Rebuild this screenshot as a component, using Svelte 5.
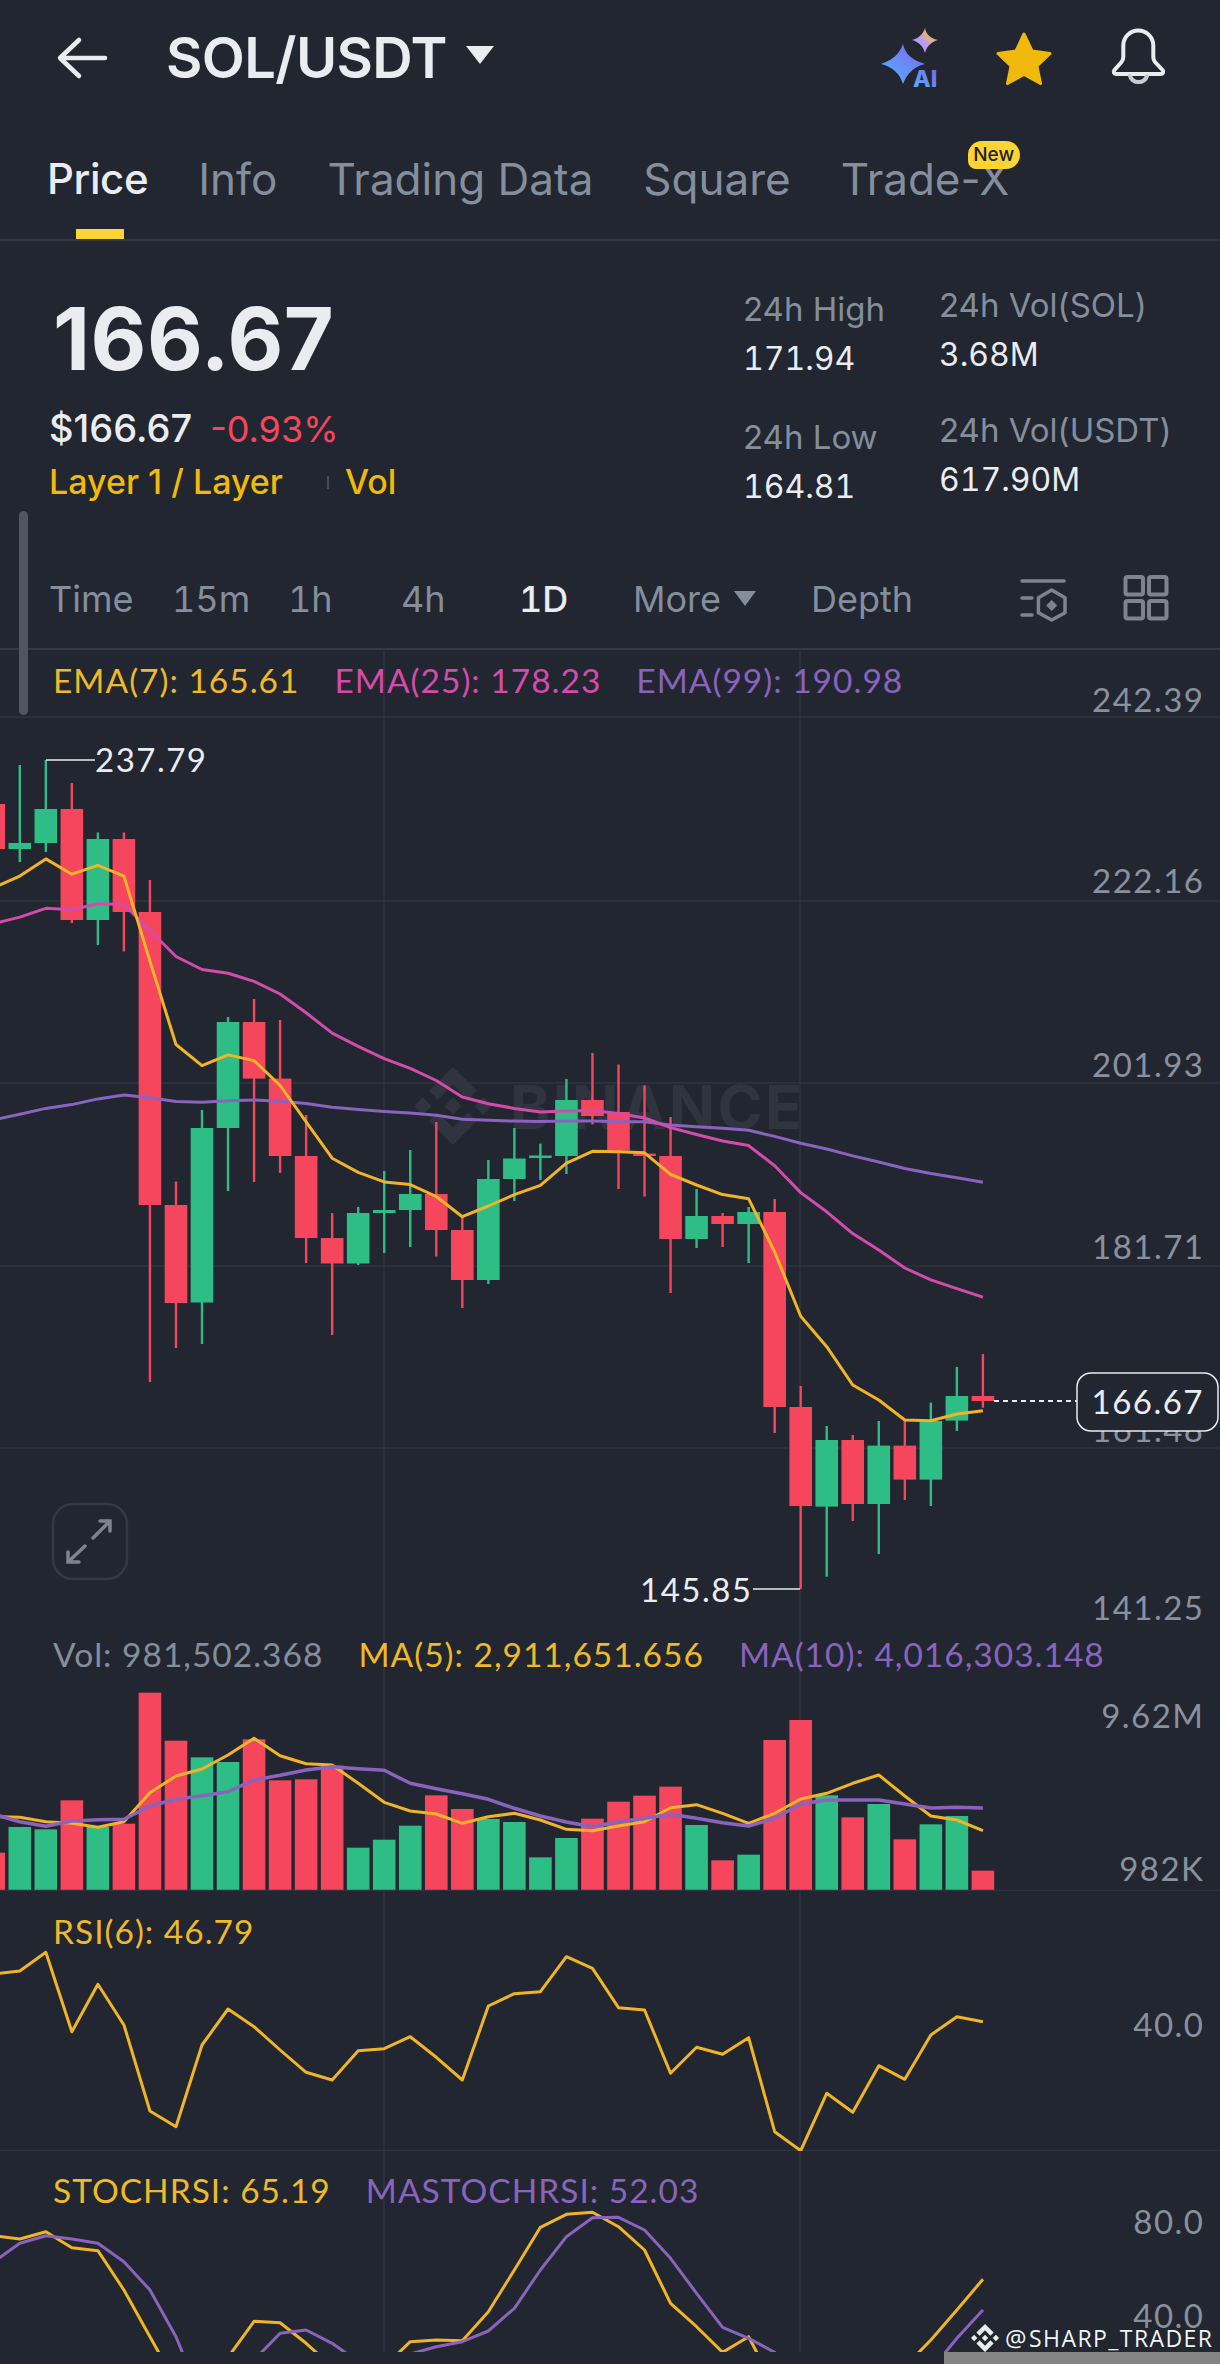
<script>
  const G = '#2EBD85';
  const R = '#F6465D';
  const xOf = (i) => 19.8 + 26.03 * i;

  // colour, wick top, body top, body bottom, wick bottom — first entry is candle -1
  const candles = [
    [R, 790, 804, 849, 870], [G, 765, 843, 849, 862], [G, 760, 809, 843, 852], [R, 783, 809, 920, 923],
    [G, 832.5, 839, 920, 945], [R, 832.5, 839, 912, 951.5], [R, 880, 912, 1205, 1382], [R, 1181.5, 1205, 1303, 1348],
    [G, 1110, 1128, 1302.5, 1344], [G, 1017, 1022, 1128, 1191], [R, 999, 1022, 1078.6, 1182], [R, 1020, 1078.6, 1156, 1173],
    [R, 1115, 1156, 1238, 1263], [R, 1213, 1238, 1263.5, 1335], [G, 1207, 1213, 1263.5, 1265], [G, 1171, 1210, 1213, 1253],
    [G, 1150, 1194, 1210, 1247], [R, 1122, 1194, 1230, 1256.5], [R, 1217.5, 1230, 1280, 1308], [G, 1160, 1179, 1280, 1284],
    [G, 1128, 1158.5, 1179, 1201], [G, 1143.6, 1155.5, 1158, 1180], [G, 1079, 1100, 1156, 1174], [R, 1053, 1100, 1116, 1124.5],
    [R, 1064.5, 1112, 1150.5, 1189], [R, 1085.5, 1153.6, 1156, 1196.5], [R, 1117, 1156, 1239, 1293], [G, 1189, 1216, 1239, 1248],
    [R, 1213, 1216, 1224, 1247], [G, 1207, 1212, 1224, 1263], [R, 1199, 1212, 1407, 1433], [R, 1386, 1407, 1506, 1589],
    [G, 1426, 1440, 1506.6, 1576.7], [R, 1435, 1440, 1504, 1521], [G, 1421, 1445.6, 1504, 1554], [R, 1421, 1445.6, 1479.6, 1500],
    [G, 1402.6, 1421, 1479.6, 1506], [G, 1367, 1396, 1420.6, 1431], [R, 1354, 1396, 1401, 1407.7]
  ];

  const mainY = (v) => 720 + v / 2.613;
  const ema7 = [
    ...[438, 408, 363, 403, 380, 408, 630, 848, 903, 875, 890, 955, 1050, 1145, 1182, 1207, 1214, 1245, 1298, 1270, 1240, 1216, 1158, 1127, 1128, 1131, 1187, 1215, 1240, 1251, 1390, 1558].map(mainY),
    1346.7, 1385, 1400, 1420, 1420.7, 1414, 1410.7
  ];
  const ema25 = [532, 515, 492, 496, 480, 482, 550, 618, 652, 662, 683, 716, 765, 818, 853, 885, 910, 942, 985, 1003, 1015, 1024, 1022, 1020, 1028, 1040, 1065, 1083, 1100, 1112, 1165, 1235, 1285, 1342, 1385, 1432, 1463, 1486, 1508].map(mainY);
  const ema99 = [1045, 1030, 1015, 1005, 990, 980, 987, 997, 999, 995, 993, 996, 1002, 1012, 1018, 1023, 1027, 1033, 1043, 1046, 1048, 1049, 1048, 1048, 1050, 1050, 1058, 1063, 1067, 1072, 1088, 1106, 1121, 1139, 1155, 1172, 1185, 1196, 1208].map(mainY);

  const volY = (v) => 1620 + v / 3;
  const BASE = 1890.7;
  const volTops = [698, 621, 628, 541, 621, 611, 218, 362, 412, 426, 358, 481, 478, 437, 683, 659, 617, 526, 567, 597, 606, 712, 654, 596, 545, 527, 500, 615, 721, 704, 360, 300, 526, 592, 552, 658, 613, 588, 752].map(volY);
  const ma5 = [590, 592, 605, 610, 622, 605, 518, 468, 447, 405, 355, 407, 431, 435, 490, 547, 573, 582, 610, 590, 580, 600, 628, 632, 618, 605, 563, 554, 580, 610, 580, 537, 520, 490, 465, 528, 588, 600, 632].map(volY);
  const ma10 = [583, 605, 619, 603, 599, 598, 558, 538, 527, 515, 480, 466, 450, 440, 446, 451, 490, 506, 521, 538, 565, 588, 606, 620, 605, 595, 583, 595, 608, 618, 595, 552, 540, 540, 540, 552, 564, 562, 564].map(volY);

  const lowY = (v) => 1900 + v / 3;
  const rsi = [222, 213, 157, 395, 253, 375, 633, 680, 435, 327, 380, 450, 517, 540, 452, 446, 410, 472, 540, 318, 281, 275, 170, 205, 323, 330, 520, 442, 463, 413, 695, 752, 580, 637, 497, 538, 405, 350, 365].map(lowY);
  const stoch = [1007, 1017, 995, 1043, 1052, 1170, 1310, 1450, 1500, 1372, 1264, 1268, 1330, 1400, 1420, 1400, 1325, 1320, 1322, 1235, 1110, 982, 943, 937, 980, 1050, 1210, 1280, 1357, 1310, 1460, 1600, 1600, 1600, 1600, 1400, 1320, 1230, 1138].map(lowY);
  const mastoch = [1085, 1030, 1007, 1017, 1030, 1085, 1170, 1310, 1500, 1500, 1380, 1300, 1290, 1330, 1385, 1420, 1362, 1340, 1325, 1293, 1225, 1110, 1010, 953, 952, 990, 1075, 1180, 1282, 1315, 1357, 1450, 1600, 1600, 1600, 1600, 1410, 1315, 1230].map(lowY);

  const pts = (ys) => ys.map((y, k) => `${xOf(k - 1)},${y.toFixed(1)}`).join(' ');
  const binancePath = 'M16.624 13.9202l2.7175 2.7154-7.353 7.353-7.353-7.352 2.7175-2.7164 4.6355 4.6595 4.6356-4.6595zm4.6366-4.6366L24 12l-2.7154 2.7164L18.5682 12l2.6924-2.7164zm-9.272.001l2.7163 2.6914-2.7164 2.7174v-.001L9.2721 12l2.7164-2.7154zm-9.2722-.001L5.4088 12l-2.6914 2.6924L0 12l2.7164-2.7164zM11.9885.0115l7.353 7.329-2.7174 2.7154-4.6356-4.6356-4.6355 4.6595-2.7174-2.7154 7.353-7.353z';
  const priceAxis = [[242.39, 712], [222.16, 893], [201.93, 1077], [181.71, 1259], [161.48, 1442], [141.25, 1620]];
</script>

<div class="page">
  <div class="scrollbar"></div>

  <header class="bar">
    <svg class="back" viewBox="56 35 52 44" aria-hidden="true">
      <path d="M79 39 60 57l19 18M61 57h44" />
    </svg>
    <h1>SOL/USDT</h1>
    <svg class="caret" viewBox="0 0 30 20" aria-hidden="true"><path d="M1 1h28L15 19z" /></svg>
    <svg class="ai" viewBox="880 25 64 64" aria-hidden="true">
      <defs>
        <linearGradient id="aiBlue" x1="0" y1="1" x2="1" y2="0">
          <stop offset="0" stop-color="#55B4FF" />
          <stop offset="1" stop-color="#7A64F0" />
        </linearGradient>
        <linearGradient id="aiSmall" x1="0" y1="1" x2="1" y2="0">
          <stop offset="0.45" stop-color="#B79CF6" />
          <stop offset="0.6" stop-color="#DDB083" />
        </linearGradient>
      </defs>
      <path class="s1" d="M903 43c2 9 8 16 22 20-12 3-18 10-22 20-3-10-10-17-22-20 12-4 19-11 22-20z" fill="url(#aiBlue)" />
      <path d="M925 27c1 6 5 10 13 12-7 2-11 6-13 13-2-7-6-11-13-13 7-2 11-6 13-12z" fill="url(#aiSmall)" />
      <text x="913" y="86" class="aitext" fill="url(#aiBlue)">AI</text>
    </svg>
    <svg class="star" viewBox="995 27 60 60" aria-hidden="true">
      <path d="M1024 33l8 17 18 2.500-13 12.500 3.500 17.500-16.500-9-16.500 9 3.500-17.500-13-12.500 18-2.500z" />
    </svg>
    <svg class="bell" viewBox="0 0 60 64" aria-hidden="true">
      <path d="M8 48H53C55 48 56 46 54.500 44L47 36Q45.300 34 45.300 31V19.500A15 15 0 0 0 15.300 19.500V31Q15.300 34 13.500 36L6.500 44C5 46 6 48 8 48Z" />
      <path class="clap" d="M22 50A9 9 0 0 0 39 50" />
    </svg>
  </header>

  <nav class="tabs">
    <span class="tab on">Price<i class="ink"></i></span>
    <span class="tab">Info</span>
    <span class="tab">Trading Data</span>
    <span class="tab">Square</span>
    <span class="tab">Trade-X<b class="new">New</b></span>
  </nav>

  <section class="ticker">
    <div class="main">
      <div class="last">166.67</div>
      <div class="fiat"><span>$166.67</span><span class="down">-0.93%</span></div>
      <div class="cats"><span>Layer 1 / Layer</span><i class="tick"></i><span>Vol</span></div>
    </div>
    <div class="stat-a">
      <div class="k">24h High</div>
      <div class="v">171.94</div>
      <div class="k low">24h Low</div>
      <div class="v">164.81</div>
    </div>
    <div class="stat-b">
      <div class="k">24h Vol(SOL)</div>
      <div class="v">3.68M</div>
      <div class="k low">24h Vol(USDT)</div>
      <div class="v">617.90M</div>
    </div>
  </section>

  <div class="tf">
    <span>Time</span>
    <span>15m</span>
    <span>1h</span>
    <span>4h</span>
    <span class="sel">1D</span>
    <span class="more">More<svg viewBox="0 0 22 15" aria-hidden="true"><path d="M0 0h22L11 15z" /></svg></span>
    <span>Depth</span>
    <svg class="ic" viewBox="1021 576 48 48" aria-hidden="true">
      <path d="M1023 581h42M1023 598h10M1023 615h10" />
      <path d="M1052.700 590l13.300 7.700v15l-13.300 7.300-13.300-7.300v-15z" />
      <path class="solid" d="M1052.700 600l5.500 5.500-5.500 5.500-5.500-5.500z" />
    </svg>
    <svg class="ic grid4" viewBox="1122 575 46 46" aria-hidden="true">
      <rect x="1124.500" y="577" width="17.500" height="17.500" rx="2" />
      <rect x="1148" y="577" width="17.500" height="17.500" rx="2" />
      <rect x="1124.500" y="601" width="17.500" height="17.500" rx="2" />
      <rect x="1148" y="601" width="17.500" height="17.500" rx="2" />
    </svg>
  </div>

  <div class="pane p-main">
    <svg viewBox="0 648 1220 983" aria-hidden="true">
      <path class="hl strong" d="M0 649H1220" />
      <path class="hl" d="M0 717H1220M0 901H1220M0 1083H1220M0 1266H1220M0 1448H1220" />
      <path class="hl" d="M384 649V1631M800 649V1631" />
      <g transform="translate(414 1067) scale(3.250)"><path class="wm" d={binancePath} /></g>
      <text class="wm wmtext" x="510" y="1129" textLength="292" lengthAdjust="spacing">BINANCE</text>

      {#each candles as c, k}
        <rect x={xOf(k - 1) - 1.2} y={c[1]} width="2.400" height={c[4] - c[1]} fill={c[0]} />
        <rect x={xOf(k - 1) - 11.3} y={c[2]} width="22.600" height={c[3] - c[2]} fill={c[0]} />
      {/each}

      <polyline class="ln purple" points={pts(ema99)} />
      <polyline class="ln pink" points={pts(ema25)} />
      <polyline class="ln yellow" points={pts(ema7)} />

      {#each priceAxis as a}
        <text class="axis" x="1204.500" y={a[1]}>{a[0].toFixed(2)}</text>
      {/each}

      <path class="hi" d="M46 760H95" />
      <text class="hitext" x="95" y="772">237.79</text>
      <path class="hi" d="M753 1589H800" />
      <text class="hitext" x="640" y="1602">145.85</text>

      <path class="dash" d="M994 1401H1077" />
      <rect class="tag" x="1077" y="1373" width="141" height="58" rx="14" />
      <text class="tagtext" x="1204" y="1414">166.67</text>

      <rect class="exp" x="53" y="1504" width="74" height="75" rx="20" />
      <path class="arr" d="M93 1538 110 1521M100 1521H110V1531M85 1546 68 1562M68 1552V1562H79" />
    </svg>
    <div class="legend l-main">
      <span class="c-y">EMA(7): 165.61</span>
      <span class="c-k">EMA(25): 178.23</span>
      <span class="c-p">EMA(99): 190.98</span>
    </div>
  </div>

  <div class="pane p-vol">
    <svg viewBox="0 1631 1220 260" aria-hidden="true">
      <path class="hl" d="M384 1631V1891M800 1631V1891" />
      {#each volTops as t, k}
        <rect x={xOf(k - 1) - 11.3} y={t} width="22.600" height={BASE - t} fill={candles[k][0]} />
      {/each}
      <path class="hl" d="M0 1890.500H1220" />
      <polyline class="ln yellow" points={pts(ma5)} />
      <polyline class="ln purple thick" points={pts(ma10)} />
      <text class="axis" x="1204.500" y="1728">9.62M</text>
      <text class="axis" x="1204.500" y="1881">982K</text>
    </svg>
    <div class="legend l-vol">
      <span class="c-g">Vol: 981,502.368</span>
      <span class="c-y">MA(5): 2,911,651.656</span>
      <span class="c-p">MA(10): 4,016,303.148</span>
    </div>
  </div>

  <div class="pane p-rsi">
    <svg viewBox="0 1891 1220 260" aria-hidden="true">
      <path class="hl" d="M384 1891V2151M800 1891V2151M0 2150.500H1220" />
      <polyline class="ln yellow" points={pts(rsi)} />
      <text class="axis" x="1204.500" y="2037">40.0</text>
    </svg>
    <div class="legend l-rsi"><span class="c-y">RSI(6): 46.79</span></div>
  </div>

  <div class="pane p-stoch">
    <svg viewBox="0 2151 1220 201" aria-hidden="true">
      <path class="hl" d="M384 2151V2352M800 2151V2352" />
      <polyline class="ln yellow" points={pts(stoch)} />
      <polyline class="ln purple" points={pts(mastoch)} />
      <text class="axis" x="1204.500" y="2234">80.0</text>
      <text class="axis" x="1204.500" y="2328">40.0</text>
      <g transform="translate(971 2324) scale(1.170)"><path class="wmark" d={binancePath} /></g>
      <text class="wmtxt at" x="1005" y="2347">@</text>
      <text class="wmtxt" x="1029" y="2347" textLength="183" lengthAdjust="spacing">SHARP_TRADER</text>
    </svg>
    <div class="legend l-stoch">
      <span class="c-y">STOCHRSI: 65.19</span>
      <span class="c-p">MASTOCHRSI: 52.03</span>
    </div>
  </div>

  <div class="foot"><div class="foot-bar"></div></div>
</div>

<style>
  :global(body) {
    margin: 0;
    background: #212630;
  }
  .page {
    position: relative;
    width: 1220px;
    height: 2364px;
    overflow: hidden;
    background: #212630;
    color: #eaecef;
    font-family: Inter, 'Liberation Sans', sans-serif;
  }
  .scrollbar {
    position: absolute;
    left: 19px;
    top: 511px;
    width: 9px;
    height: 204px;
    border-radius: 5px;
    background: #50555f;
    z-index: 2;
  }

  /* header */
  .bar {
    display: flex;
    align-items: center;
    height: 115px;
    padding: 0 52px 0 56px;
    box-sizing: border-box;
  }
  .back {
    width: 52px;
    height: 44px;
    fill: none;
    stroke: #eaecef;
    stroke-width: 4.5;
    stroke-linecap: round;
    stroke-linejoin: round;
  }
  h1 {
    margin: 0 0 0 58px;
    font-size: 56px;
    line-height: 60px;
    font-weight: 600;
    letter-spacing: -0.6px;
  }
  .caret {
    width: 30px;
    height: 20px;
    margin: -5px 0 0 18px;
    fill: #eaecef;
  }
  .ai {
    width: 64px;
    height: 64px;
    margin-left: auto;
  }
  .aitext {
    font-size: 23px;
    font-weight: 800;
    font-family: Inter, sans-serif;
  }
  .star {
    width: 60px;
    height: 60px;
    margin-left: 51px;
    fill: #f0b90b;
    stroke: #f0b90b;
    stroke-width: 3;
    stroke-linejoin: round;
  }
  .bell {
    width: 60px;
    height: 64px;
    margin-left: 53px;
    fill: none;
    stroke: #eaecef;
    stroke-width: 4;
    stroke-linecap: round;
    stroke-linejoin: round;
  }
  .bell .clap {
    stroke: #c9ccd2;
  }

  /* tabs */
  .tabs {
    display: flex;
    gap: 50px;
    height: 126px;
    padding: 39px 0 0 47px;
    box-sizing: border-box;
    border-bottom: 2px solid #343944;
  }
  .tab {
    position: relative;
    height: 85px;
    font-size: 44px;
    line-height: 50px;
    color: #848e9c;
    white-space: nowrap;
  }
  .tab.on {
    color: #eaecef;
    font-size: 42px;
    font-weight: 500;
    letter-spacing: -0.4px;
  }
  .ink {
    position: absolute;
    left: 29px;
    bottom: 0;
    width: 48px;
    height: 10px;
    background: #fcd535;
  }
  .new {
    position: absolute;
    left: 127px;
    top: -13px;
    width: 52px;
    height: 28px;
    border-radius: 14px 14px 14px 8px;
    background: #fcd535;
    color: #1e2329;
    font-size: 19px;
    line-height: 28px;
    font-weight: 500;
    text-align: center;
  }

  /* ticker */
  .ticker {
    display: flex;
    height: 299px;
    box-sizing: border-box;
  }
  .main {
    width: 743px;
    padding-left: 49px;
    box-sizing: border-box;
  }
  .last {
    margin: 56px 0 0 4px;
    font-size: 86px;
    line-height: 84px;
    font-weight: 700;
    letter-spacing: 0.5px;
  }
  .fiat {
    display: flex;
    align-items: baseline;
    gap: 18px;
    margin-top: 25px;
    font-size: 38px;
    line-height: 44px;
    font-weight: 500;
  }
  .down {
    color: #f6465d;
    font-size: 36px;
    font-weight: 400;
  }
  .cats {
    display: flex;
    align-items: center;
    margin-top: 11px;
    font-size: 34px;
    line-height: 40px;
    color: #f0b90b;
    font-weight: 500;
  }
  .tick {
    width: 2px;
    height: 13px;
    margin: 0 16px 0 44px;
    background: #474d57;
  }
  .stat-a {
    width: 196px;
    padding-top: 48px;
  }
  .stat-b {
    padding-top: 44px;
  }
  .k,
  .v {
    font-size: 33px;
    line-height: 40px;
    white-space: nowrap;
  }
  .k {
    color: #848e9c;
  }
  .v {
    margin-top: 10px;
    font-size: 32px;
    font-variant-numeric: tabular-nums;
  }
  .low {
    margin-top: 38px;
  }
  .stat-b .low {
    margin-top: 35px;
  }

  /* timeframe row */
  .tf {
    display: grid;
    grid-template-columns: 123px 116px 113px 118px 114px 178px 209px 103px 46px;
    height: 108px;
    padding: 37px 0 0 49px;
    box-sizing: border-box;
    font-size: 36px;
    line-height: 44px;
    color: #848e9c;
    font-variant-numeric: tabular-nums;
  }
  .sel {
    color: #eaecef;
    font-weight: 500;
  }
  .more {
    display: flex;
    gap: 13px;
  }
  .more svg {
    width: 22px;
    height: 15px;
    margin-top: 14px;
    fill: #848e9c;
  }
  .ic {
    width: 48px;
    height: 48px;
    margin-top: -1px;
    fill: none;
    stroke: #7d8490;
    stroke-width: 3.500;
    stroke-linecap: round;
    stroke-linejoin: round;
  }
  .ic .solid {
    fill: #7d8490;
    stroke: none;
  }
  .grid4 {
    width: 46px;
    height: 46px;
    margin-top: -2px;
    stroke-width: 4;
  }

  /* chart */
  .pane {
    position: relative;
  }
  .pane svg {
    display: block;
    width: 1220px;
  }
  .p-main svg { height: 983px; }
  .p-vol svg,
  .p-rsi svg { height: 260px; }
  .p-stoch svg { height: 201px; }
  .legend {
    position: absolute;
    left: 53px;
    display: flex;
    gap: 35px;
    font-family: Lato, 'Open Sans', sans-serif;
    font-size: 33.500px;
    line-height: 40px;
    white-space: nowrap;
    letter-spacing: 1px;
  }
  .l-main { top: 12px; }
  .l-vol { top: 3px; }
  .l-rsi { top: 20px; }
  .l-stoch { top: 19px; }
  .c-y { color: #eeb92b; }
  .c-k { color: #d44cab; }
  .c-p { color: #8a63bd; }
  .c-g { color: #848e9c; }

  .hl {
    fill: none;
    stroke: #2f3440;
    stroke-width: 1.500;
  }
  .hl.strong {
    stroke: #343944;
    stroke-width: 2;
  }
  .wm {
    fill: #2f343f;
  }
  .wmtext {
    font-family: Inter, sans-serif;
    font-weight: 700;
    font-size: 61px;
  }
  .ln {
    fill: none;
    stroke-width: 3;
    stroke-linejoin: round;
  }
  .yellow { stroke: #f0b429; }
  .pink { stroke: #d44cab; }
  .purple { stroke: #8a63bd; }
  .thick { stroke-width: 3.500; }
  .axis {
    font-family: Lato, 'Open Sans', sans-serif;
    font-size: 33px;
    fill: #8a919e;
    text-anchor: end;
    letter-spacing: 1.500px;
  }
  .hi {
    fill: none;
    stroke: #eaecef;
    stroke-width: 1.500;
  }
  .hitext,
  .tagtext {
    font-family: Lato, 'Open Sans', sans-serif;
    font-size: 33px;
    fill: #eaecef;
    letter-spacing: 1.500px;
  }
  .tagtext {
    text-anchor: end;
  }
  .dash {
    fill: none;
    stroke: #eaecef;
    stroke-width: 2;
    stroke-dasharray: 5 4;
  }
  .tag {
    fill: #212630;
    stroke: #eaecef;
    stroke-width: 1.500;
  }
  .exp {
    fill: none;
    stroke: #343944;
    stroke-width: 2.500;
  }
  .arr {
    fill: none;
    stroke: #7d8490;
    stroke-width: 3.500;
    stroke-linecap: round;
  }
  .wmark {
    fill: #eaecef;
  }
  .wmtxt {
    font-family: 'Open Sans', sans-serif;
    font-size: 23px;
    fill: #f2f3f5;
  }
  .at {
    font-size: 24px;
  }
  .foot {
    height: 12px;
    padding-left: 944px;
  }
  .foot-bar {
    height: 12px;
    background: #848484;
  }
</style>
